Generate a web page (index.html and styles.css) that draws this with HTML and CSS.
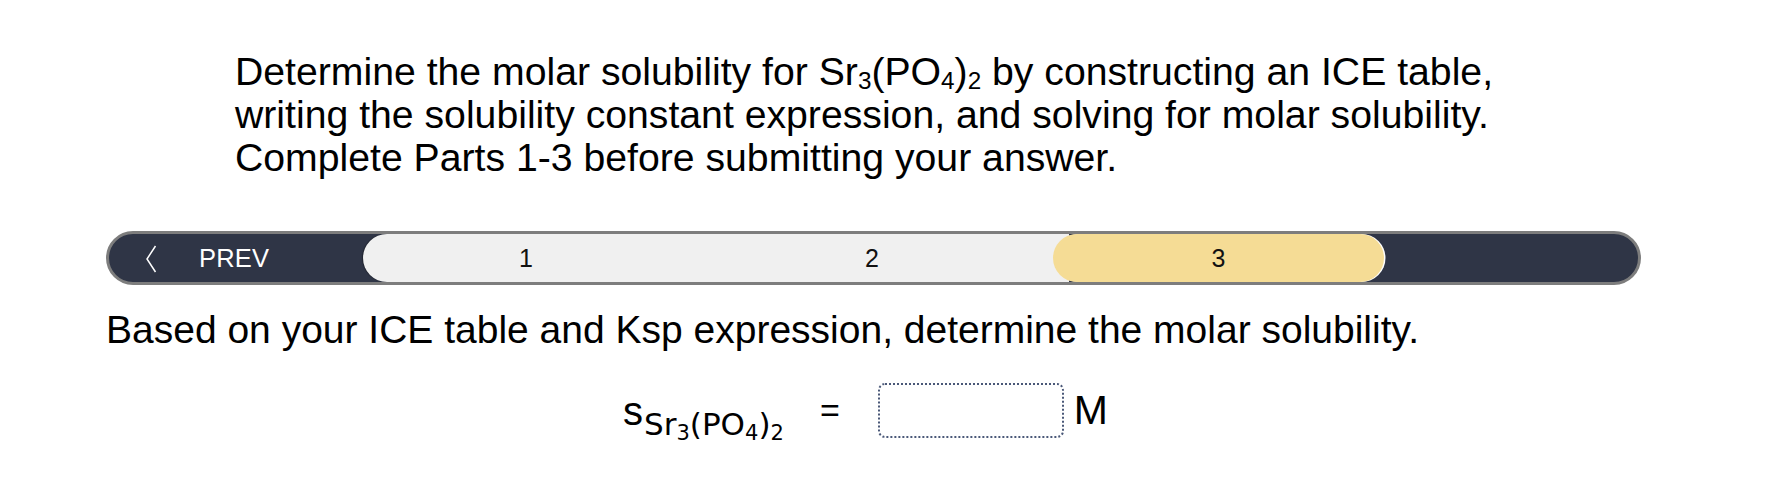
FILE: index.html
```html
<!DOCTYPE html>
<html>
<head>
<meta charset="utf-8">
<link rel="stylesheet" href="styles.css">
</head>
<body>
<div class="page">
  <p class="intro">Determine the molar solubility for Sr<sub>3</sub>(PO<sub>4</sub>)<sub>2</sub> by constructing an ICE table,<br>writing the solubility constant expression, and solving for molar solubility.<br>Complete Parts 1-3 before submitting your answer.</p>
  <nav class="steps">
    <div class="prev">
      <svg class="chev" width="12" height="28" viewBox="0 0 12 28"><polyline points="10.5,1 2,14 10.5,27" fill="none" stroke="#ffffff" stroke-width="1.5"/></svg>
      <span class="prev-label">PREV</span>
    </div>
    <div class="seg seg1">1</div>
    <div class="seg seg2">2</div>
    <div class="seg seg3">3</div>
    <div class="fill"></div>
  </nav>
  <p class="question">Based on your ICE table and Ksp expression, determine the molar solubility.</p>
  <div class="answer">
    <span class="var">s<span class="varsub">Sr<sub>3</sub>(PO<sub>4</sub>)<sub>2</sub></span></span>
    <span class="eq">=</span>
    <span class="input"></span>
    <span class="unit">M</span>
  </div>
</div>
</body>
</html>
```
FILE: styles.css
```css
html, body {
  margin: 0;
  padding: 0;
  background: #ffffff;
}
body {
  font-family: "Liberation Sans", Arial, sans-serif;
  color: #000000;
}
.page {
  padding-left: 106px;
  width: 1535px;
  padding-top: 50px;
  padding-bottom: 40px;
}
.intro {
  margin: 0 0 52px 129px;
  font-size: 39.2px;
  line-height: 43px;
}
.intro sub {
  font-size: 0.62em;
  line-height: 0;
  vertical-align: -0.18em;
}
.steps {
  box-sizing: border-box;
  display: flex;
  width: 1535px;
  height: 54px;
  border: 3px solid #7d7d7d;
  border-radius: 27px;
  background: #2f3546;
  overflow: hidden;
}
.prev {
  width: 254px;
  flex: none;
  display: flex;
  align-items: center;
  padding-left: 36px;
  box-sizing: border-box;
  color: #ffffff;
}
.chev {
  display: block;
  margin-top: 2px;
}
.prev-label {
  margin-left: 42px;
  font-size: 25.5px;
  letter-spacing: 0.2px;
}
.seg {
  flex: none;
  display: flex;
  align-items: center;
  justify-content: center;
  box-sizing: border-box;
  font-size: 25px;
  color: #111111;
}
.seg1 {
  width: 336px;
  padding-right: 10px;
  background: #f0f0f0;
  border-radius: 24px 0 0 24px;
  box-shadow: -1px 0 1px rgba(0, 0, 0, 0.35);
}
.seg2 {
  width: 370px;
  padding-right: 24px;
  margin-right: -16px;
  background: #f0f0f0;
}
.seg3 {
  width: 331px;
  background: #f5dc95;
  border-radius: 24px;
  box-shadow: 1.5px 0 0 #ffffff;
}
.fill {
  flex: 1;
}
.question {
  margin: 23px 0 32px 0;
  font-size: 39px;
  line-height: 43px;
}
.answer {
  display: flex;
  align-items: center;
  padding-left: 517px;
  height: 55px;
}
.var {
  font-size: 40px;
  line-height: 43px;
  margin-bottom: -2px;
}
.varsub {
  font-family: "DejaVu Sans", "Liberation Sans", sans-serif;
  font-size: 31px;
  vertical-align: -10px;
  line-height: 0;
  margin-left: 1px;
}
.varsub sub {
  font-size: 21px;
  line-height: 0;
  vertical-align: -5px;
}
.eq {
  margin-left: 36px;
  font-size: 34px;
  line-height: 43px;
}
.input {
  box-sizing: border-box;
  width: 186px;
  height: 55px;
  margin-left: 38px;
  border: 2px dotted #4a5878;
  border-radius: 7px;
}
.unit {
  margin-left: 10px;
  font-size: 41px;
  line-height: 43px;
}
```
